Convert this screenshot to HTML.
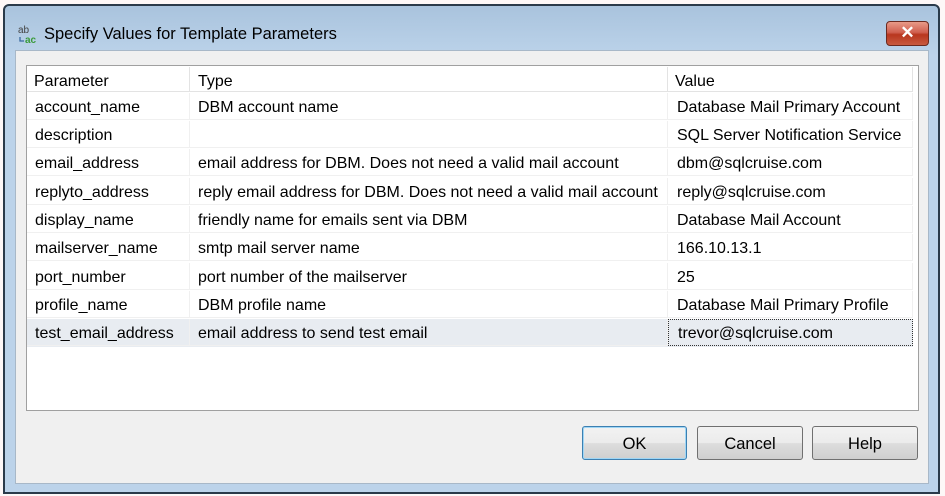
<!DOCTYPE html>
<html><head><style>
body{margin:0;width:945px;height:496px;background:#fdf7f7;position:relative;overflow:hidden;font-family:"Liberation Sans",sans-serif;}
.abs{position:absolute;}
.win{left:3px;top:4px;width:937px;height:490px;background:linear-gradient(#a9c3dd,#bcd3ea 50px,#bcd3ea);border:2px solid #2a3a4a;border-radius:6px 6px 0 0;box-sizing:border-box;}
.client{left:15px;top:50px;width:914px;height:434px;background:#f0f0f0;border:1px solid #a8b8c8;box-sizing:border-box;}
.title{left:44px;top:25px;font-size:16.5px;color:#000;}
.close{left:886px;top:21px;width:43px;height:25px;border:1px solid #6b2a20;border-radius:4px;background:linear-gradient(#e89a88,#d06050 45%,#b8361e 55%,#c85a40);box-sizing:border-box;color:#fff;font-weight:bold;font-size:17px;text-align:center;line-height:22px;}
.tbl{left:26px;top:65px;width:893px;height:346px;background:#fff;border:1px solid #a0a0a0;box-sizing:border-box;}
.row{position:absolute;left:0;width:886px;height:28px;font-size:16px;color:#000;}
.row div{position:absolute;top:0;height:27px;line-height:30px;border-bottom:1px solid #f0f0f0;border-right:1px solid #f0f0f0;}
.c1{left:0;width:163px;padding-left:8px;box-sizing:border-box;}
.c2{left:163px;width:478px;padding-left:8px;box-sizing:border-box;}
.c3{left:641px;width:245px;padding-left:9px;box-sizing:border-box;}
.hdr div{height:25px;line-height:29px;border-right:1px solid #e3e3e3;border-bottom:1px solid #e3e3e3;}
.btn{top:426px;height:34px;border:1px solid #707070;border-radius:3px;background:linear-gradient(#f2f2f2,#ebebeb 50%,#dddddd 51%,#cfcfcf);box-sizing:border-box;font-size:16.5px;text-align:center;line-height:34px;}
</style></head><body>
<div class="abs win"></div>
<div class="abs client"></div>
<svg class="abs" style="left:17px;top:23px" width="24" height="24"><text x="1" y="10" font-size="10" fill="#444" font-family="Liberation Sans">ab</text><text x="8" y="20" font-size="10" font-weight="bold" fill="#3a9a3a" font-family="Liberation Sans">ac</text><path d="M3 14 v4 h4" stroke="#3a6aa0" fill="none" stroke-width="1.3"/></svg>
<div class="abs title">Specify Values for Template Parameters</div>
<div class="abs close">✕</div>
<div class="abs tbl">
<div class="row hdr" style="top:1px"><div class="c1" style="padding-left:7px">Parameter</div><div class="c2">Type</div><div class="c3" style="padding-left:7px">Value</div></div>
<div class="row" style="top:27px"><div class="c1">account_name</div><div class="c2">DBM account name</div><div class="c3">Database Mail Primary Account</div></div>
<div class="row" style="top:55px"><div class="c1">description</div><div class="c2"></div><div class="c3">SQL Server Notification Service</div></div>
<div class="row" style="top:83px"><div class="c1">email_address</div><div class="c2">email address for DBM. Does not need a valid mail account</div><div class="c3">dbm@sqlcruise.com</div></div>
<div class="row" style="top:112px"><div class="c1">replyto_address</div><div class="c2">reply email address for DBM. Does not need a valid mail account</div><div class="c3">reply@sqlcruise.com</div></div>
<div class="row" style="top:140px"><div class="c1">display_name</div><div class="c2">friendly name for emails sent via DBM</div><div class="c3">Database Mail Account</div></div>
<div class="row" style="top:168px"><div class="c1">mailserver_name</div><div class="c2">smtp mail server name</div><div class="c3">166.10.13.1</div></div>
<div class="row" style="top:197px"><div class="c1">port_number</div><div class="c2">port number of the mailserver</div><div class="c3">25</div></div>
<div class="row" style="top:225px"><div class="c1">profile_name</div><div class="c2">DBM profile name</div><div class="c3">Database Mail Primary Profile</div></div>
<div class="row" style="top:253px;background:#e8ecf1"><div class="c1">test_email_address</div><div class="c2">email address to send test email</div><div class="c3" style="border:1px dotted #333;height:27px;line-height:28px">trevor@sqlcruise.com</div></div>
</div>
<div class="abs btn" style="left:582px;width:105px;border-color:#3c7fb1;box-shadow:inset 0 0 0 1px #9fd6f5">OK</div>
<div class="abs btn" style="left:697px;width:106px">Cancel</div>
<div class="abs btn" style="left:812px;width:106px">Help</div>
</body></html>
